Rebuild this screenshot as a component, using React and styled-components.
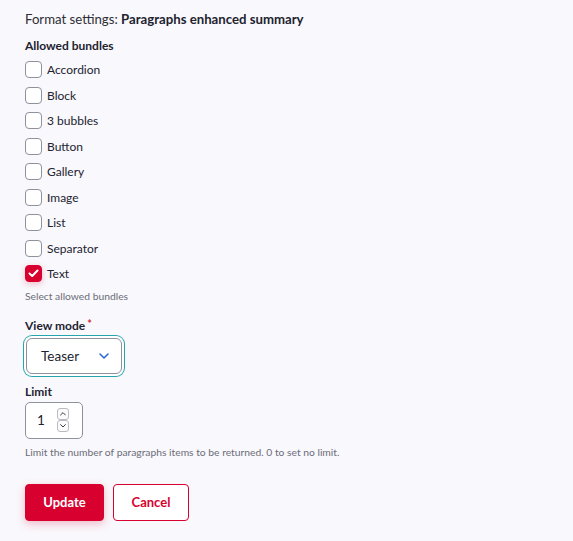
import React, { useState } from 'react';
import styled, { createGlobalStyle } from 'styled-components';

const GlobalStyle = createGlobalStyle`
  html, body {
    margin: 0;
    padding: 0;
    background: #f9f8fc;
  }
  body {
    font-family: Lato, "Noto Sans", sans-serif;
    color: #222330;
  }
`;

const accent = '#d8002f';

const Page = styled.form`
  padding: 10px 25px 20px;
`;

const Title = styled.div`
  font-size: 13.2px;
  line-height: 18px;
  color: #2d2e36;

  strong {
    font-weight: 700;
    color: #222330;
  }
`;

const FieldLabel = styled.div`
  font-size: 12px;
  font-weight: 700;
  line-height: 16px;
  margin-top: ${props => props.gap || 0}px;
  color: #222330;

  span {
    color: #d0303f;
    font-weight: 700;
    margin-left: 2px;
    vertical-align: top;
    font-size: 11px;
    line-height: 12px;
  }
`;

const CheckList = styled.div`
  display: flex;
  flex-direction: column;
  margin-top: 3px;
`;

const CheckRow = styled.label`
  display: flex;
  align-items: center;
  gap: 5px;
  height: 25.5px;
  font-size: 12px;
  cursor: pointer;
`;

const Box = styled.span`
  box-sizing: border-box;
  width: 17px;
  height: 17px;
  border-radius: 4px;
  display: flex;
  align-items: center;
  justify-content: center;
  border: 1px solid ${props => (props.checked ? accent : '#8e929c')};
  background: ${props => (props.checked ? accent : '#fff')};
  box-shadow: ${props => (props.checked ? '0 2px 6px rgba(216, 0, 47, 0.25)' : 'none')};
`;

const Description = styled.div`
  font-size: 10.3px;
  line-height: 14px;
  color: #6b6d79;
  margin-top: ${props => props.gap || 0}px;
`;

const SelectBox = styled.div`
  box-sizing: border-box;
  margin: 4px 0 0 1px;
  width: 96px;
  height: 36px;
  border: 1px solid #8e929c;
  border-radius: 6px;
  background: #fff;
  box-shadow: 0 0 0 2px #fff, 0 0 0 3px #26a5ad;
  display: flex;
  align-items: center;
  justify-content: space-between;
  padding: 0 12px 0 14px;
  font-size: 13.5px;
  color: #222330;
`;

const NumberBox = styled.div`
  box-sizing: border-box;
  margin-top: 2px;
  width: 58px;
  height: 37px;
  border: 1px solid #8e929c;
  border-radius: 5px;
  background: #fff;
  display: flex;
  align-items: center;
  padding-left: 11px;
  gap: 12px;
  font-size: 13.5px;
`;

const Spinner = styled.div`
  display: flex;
  flex-direction: column;
`;

const SpinButton = styled.span`
  box-sizing: border-box;
  width: 12px;
  height: 12px;
  border: 1px solid #b9bbc3;
  border-radius: 3px;
  display: flex;
  align-items: center;
  justify-content: center;
  background: #fbfbfc;
`;

const Actions = styled.div`
  display: flex;
  gap: 9px;
  margin-top: 25px;
`;

const Button = styled.button`
  box-sizing: border-box;
  height: 37px;
  padding: 0 16px;
  border-radius: 4px;
  font-family: inherit;
  font-size: 13px;
  font-weight: 700;
  cursor: pointer;
  border: 1px solid ${accent};
  background: ${props => (props.primary ? accent : '#fff')};
  color: ${props => (props.primary ? '#fff' : accent)};
  box-shadow: ${props => (props.primary ? '0 3px 8px rgba(216, 0, 47, 0.25)' : 'none')};
  width: ${props => (props.primary ? 79 : 76)}px;
`;

const bundles = ['Accordion', 'Block', '3 bubbles', 'Button', 'Gallery', 'Image', 'List', 'Separator', 'Text'];

const Check = () => (
  <svg width="11" height="9" viewBox="0 0 11 9">
    <polyline points="1.5,4.5 4.2,7 9.5,1.5" fill="none" stroke="#fff" strokeWidth="2" strokeLinecap="round" strokeLinejoin="round" />
  </svg>
);

const Chevron = ({ size = 10, color = '#2463d6', up = false, width = 1.5 }) => (
  <svg width={size} height={size * 0.6} viewBox="0 0 10 6">
    <polyline
      points={up ? '1,5 5,1 9,5' : '1,1 5,5 9,1'}
      fill="none"
      stroke={color}
      strokeWidth={width}
      strokeLinecap="round"
      strokeLinejoin="round"
    />
  </svg>
);

const App = () => {
  const [checked, setChecked] = useState({ Text: true });

  return (
    <>
      <GlobalStyle />
      <Page onSubmit={e => e.preventDefault()}>
        <Title>
          Format settings: <strong>Paragraphs enhanced summary</strong>
        </Title>

        <FieldLabel gap={10}>Allowed bundles</FieldLabel>
        <CheckList>
          {bundles.map(name => (
            <CheckRow key={name} onClick={() => setChecked({ ...checked, [name]: !checked[name] })}>
              <Box checked={!!checked[name]}>{checked[name] && <Check />}</Box>
              {name}
            </CheckRow>
          ))}
        </CheckList>
        <Description gap={2}>Select allowed bundles</Description>

        <FieldLabel gap={15}>
          View mode<span>*</span>
        </FieldLabel>
        <SelectBox>
          Teaser
          <Chevron />
        </SelectBox>

        <FieldLabel gap={10}>Limit</FieldLabel>
        <NumberBox>
          1
          <Spinner>
            <SpinButton>
              <Chevron size={6} color="#333" up width={1.6} />
            </SpinButton>
            <SpinButton>
              <Chevron size={6} color="#333" width={1.6} />
            </SpinButton>
          </Spinner>
        </NumberBox>
        <Description gap={6}>Limit the number of paragraphs items to be returned. 0 to set no limit.</Description>

        <Actions>
          <Button primary type="submit">Update</Button>
          <Button type="button">Cancel</Button>
        </Actions>
      </Page>
    </>
  );
};

export default App;
